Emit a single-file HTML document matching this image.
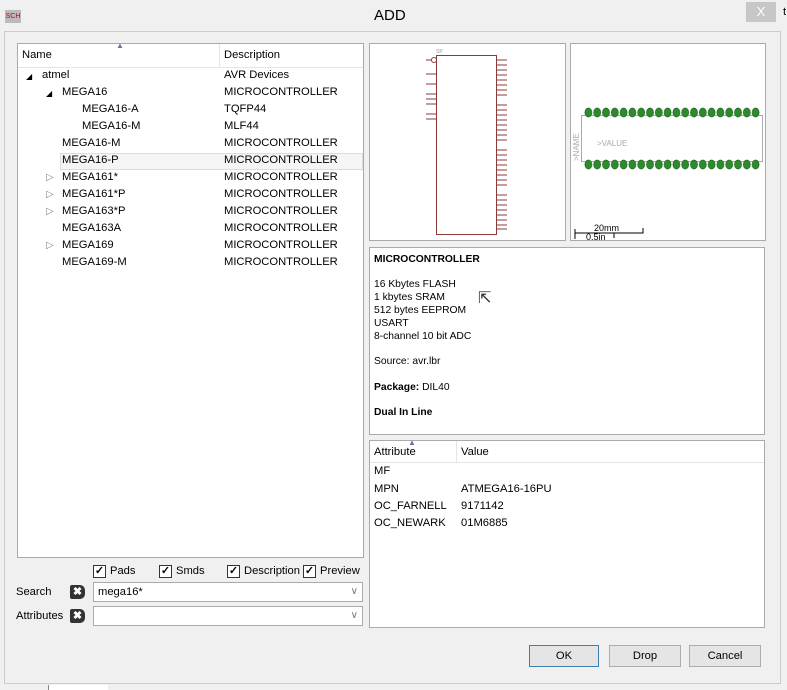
<!DOCTYPE html>
<html><head><meta charset="utf-8"><style>
*{margin:0;padding:0;box-sizing:border-box}
body{width:787px;height:690px;background:#f0f0f0;font-family:"Liberation Sans",sans-serif;font-size:11.2px;color:#000;position:relative;overflow:hidden}
.a{position:absolute}
.box{position:absolute;background:#fff;border:1px solid #aaa}
.t{position:absolute;white-space:nowrap;line-height:17px}
.btn{position:absolute;height:22px;border:1px solid #acacac;background:#e5e5e5;text-align:center;line-height:20px}
.cb{position:absolute;width:13px;height:13px;border:1px solid #333;background:#fff;font-size:11px;line-height:11px;text-align:center;font-weight:bold}
.x{position:absolute;width:15px;height:14px;background:#333;color:#fff;font-size:11px;font-weight:bold;text-align:center;line-height:14px;border-radius:2px 5px 5px 2px}
.combo{position:absolute;height:20px;background:#fff;border:1px solid #aaa;padding-left:4px;line-height:18px}
.combo:after{content:"\2228";position:absolute;right:4px;top:0;color:#777;font-size:10px}
.d{font-size:10.3px}
</style></head><body>
<div class="a" style="left:0;top:0;width:787px;height:31px;background:#f0f0f0"></div>
<div class="a" style="left:5px;top:10px;width:16px;height:13px;background:#bbb;color:#c00;font-size:7px;line-height:13px;text-align:center">SCH</div>
<div class="t" style="left:374px;top:7px;font-size:15px">ADD</div>
<div class="a" style="left:746px;top:2px;width:30px;height:20px;background:#c7c7c7;color:#fff;text-align:center;line-height:20px;font-size:13px">X</div>
<div class="t" style="left:783px;top:4px">t</div>
<div class="a" style="left:4px;top:31px;width:777px;height:653px;border:1px solid #ccc;background:#f0f0f0"></div>

<div class="box" style="left:17px;top:43px;width:347px;height:515px">
<div class="t" style="left:4px;top:3px">Name</div>
<div class="t" style="left:206px;top:3px">Description</div>
<div class="a" style="left:201px;top:0;width:1px;height:23px;background:#e5e5e5"></div>
<div class="a" style="left:0;top:23px;width:345px;height:1px;background:#e5e5e5"></div>
<div class="t" style="left:98px;top:-7px;font-size:8px;color:#679">&#9650;</div>
<div class="a" style="left:42px;top:109px;width:303px;height:17px;background:#f5f5f5;border:1px solid #ddd"></div>
<div class="t" style="left:8px;top:24px;font-size:8px">&#9698;</div><div class="t" style="left:24px;top:23px">atmel</div><div class="t" style="left:206px;top:23px">AVR Devices</div>
<div class="t" style="left:28px;top:41px;font-size:8px">&#9698;</div><div class="t" style="left:44px;top:40px">MEGA16</div><div class="t" style="left:206px;top:40px">MICROCONTROLLER</div>
<div class="t" style="left:64px;top:57px">MEGA16-A</div><div class="t" style="left:206px;top:57px">TQFP44</div>
<div class="t" style="left:64px;top:74px">MEGA16-M</div><div class="t" style="left:206px;top:74px">MLF44</div>
<div class="t" style="left:44px;top:91px">MEGA16-M</div><div class="t" style="left:206px;top:91px">MICROCONTROLLER</div>
<div class="t" style="left:44px;top:108px">MEGA16-P</div><div class="t" style="left:206px;top:108px">MICROCONTROLLER</div>
<div class="t" style="left:28px;top:125px;color:#888;font-size:10px">&#9655;</div><div class="t" style="left:44px;top:125px">MEGA161*</div><div class="t" style="left:206px;top:125px">MICROCONTROLLER</div>
<div class="t" style="left:28px;top:142px;color:#888;font-size:10px">&#9655;</div><div class="t" style="left:44px;top:142px">MEGA161*P</div><div class="t" style="left:206px;top:142px">MICROCONTROLLER</div>
<div class="t" style="left:28px;top:159px;color:#888;font-size:10px">&#9655;</div><div class="t" style="left:44px;top:159px">MEGA163*P</div><div class="t" style="left:206px;top:159px">MICROCONTROLLER</div>
<div class="t" style="left:44px;top:176px">MEGA163A</div><div class="t" style="left:206px;top:176px">MICROCONTROLLER</div>
<div class="t" style="left:28px;top:193px;color:#888;font-size:10px">&#9655;</div><div class="t" style="left:44px;top:193px">MEGA169</div><div class="t" style="left:206px;top:193px">MICROCONTROLLER</div>
<div class="t" style="left:44px;top:210px">MEGA169-M</div><div class="t" style="left:206px;top:210px">MICROCONTROLLER</div>
</div>

<svg class="a" style="left:369px;top:43px" width="197" height="198">
<rect x="0.5" y="0.5" width="196" height="197" fill="#fff" stroke="#aaa"/>
<g stroke="#8b3a3a" fill="none" stroke-width="1">
<rect x="67.5" y="12.5" width="60" height="179"/>
<path d="M128 17h10M128 22h10M128 27h10M128 32h10M128 37h10M128 42h10M128 47h10M128 52h10M128 62h10M128 67h10M128 72h10M128 77h10M128 82h10M128 87h10M128 92h10M128 97h10M128 107h10M128 112h10M128 117h10M128 122h10M128 127h10M128 132h10M128 137h10M128 142h10M128 152h10M128 157h10M128 162h10M128 167h10M128 172h10M128 177h10M128 182h10M128 186h10"/>
<path d="M57 17h6M57 31h10M57 41h10M57 51h10M57 56h10M57 61h10M57 71h10M57 76h10"/>
<circle cx="65" cy="17" r="2.5"/>
</g>
<text x="67" y="10" font-size="5" fill="#999">SP</text>
</svg>

<svg class="a" style="left:570px;top:43px" width="196" height="198">
<defs><pattern id="p" x="14" y="64" width="8.8" height="52" patternUnits="userSpaceOnUse"><ellipse cx="4.4" cy="5.5" rx="3.5" ry="4.5" fill="#2f8a2f" stroke="#1a6a1a" stroke-width="0.7"/></pattern></defs>
<rect x="0.5" y="0.5" width="195" height="197" fill="#fff" stroke="#aaa"/>
<rect x="11.5" y="72.5" width="181" height="46" fill="none" stroke="#aaa"/>
<rect x="14" y="64" width="176" height="64" fill="url(#p)"/>
<text x="27" y="103" font-size="8" fill="#aaa">&gt;VALUE</text>
<text transform="translate(9,118) rotate(-90)" font-size="8" fill="#aaa">&gt;NAME</text>
<path d="M5 186v10M5 190h68v-5M44 190v5" stroke="#000" fill="none"/>
<text x="24" y="188" font-size="9">20mm</text>
<text x="16" y="197" font-size="9">0.5in</text>
</svg>

<div class="box" style="left:369px;top:247px;width:396px;height:188px">
<div class="t d" style="left:4px;top:3px;font-weight:bold">MICROCONTROLLER</div>
<div class="a d" style="left:4px;top:30px;line-height:13px">16 Kbytes FLASH<br>1 kbytes SRAM<br>512 bytes EEPROM<br>USART<br>8-channel 10 bit ADC</div>
<div class="t d" style="left:4px;top:105px">Source: avr.lbr</div>
<div class="t d" style="left:4px;top:131px"><b>Package:</b> DIL40</div>
<div class="t d" style="left:4px;top:156px;font-weight:bold">Dual In Line</div>
<div class="t" style="left:108px;top:42px;font-size:16px;color:#333">&#8689;</div>
</div>

<div class="box" style="left:369px;top:440px;width:396px;height:188px">
<div class="t" style="left:4px;top:3px">Attribute</div>
<div class="t" style="left:91px;top:3px">Value</div>
<div class="t" style="left:38px;top:-7px;font-size:8px;color:#679">&#9650;</div>
<div class="a" style="left:86px;top:0;width:1px;height:21px;background:#e5e5e5"></div>
<div class="a" style="left:0;top:21px;width:394px;height:1px;background:#e5e5e5"></div>
<div class="t" style="left:4px;top:22px">MF</div>
<div class="t" style="left:4px;top:40px">MPN</div><div class="t" style="left:91px;top:40px">ATMEGA16-16PU</div>
<div class="t" style="left:4px;top:57px">OC_FARNELL</div><div class="t" style="left:91px;top:57px">9171142</div>
<div class="t" style="left:4px;top:74px">OC_NEWARK</div><div class="t" style="left:91px;top:74px">01M6885</div>
</div>

<div class="cb" style="left:93px;top:565px">&#10003;</div><div class="t" style="left:110px;top:563px">Pads</div>
<div class="cb" style="left:159px;top:565px">&#10003;</div><div class="t" style="left:176px;top:563px">Smds</div>
<div class="cb" style="left:227px;top:565px">&#10003;</div><div class="t" style="left:244px;top:563px">Description</div>
<div class="cb" style="left:303px;top:565px">&#10003;</div><div class="t" style="left:320px;top:563px">Preview</div>
<div class="t" style="left:16px;top:584px">Search</div>
<div class="x" style="left:70px;top:585px">&#10006;</div>
<div class="combo" style="left:93px;top:582px;width:270px">mega16*</div>
<div class="t" style="left:16px;top:608px">Attributes</div>
<div class="x" style="left:70px;top:609px">&#10006;</div>
<div class="combo" style="left:93px;top:606px;width:270px"></div>

<div class="btn" style="left:529px;top:645px;width:70px;border-color:#3c7fb1">OK</div>
<div class="btn" style="left:609px;top:645px;width:72px">Drop</div>
<div class="btn" style="left:689px;top:645px;width:72px">Cancel</div>
<div class="a" style="left:48px;top:685px;width:60px;height:5px;background:#fff;border-left:1px solid #888"></div>
</body></html>
